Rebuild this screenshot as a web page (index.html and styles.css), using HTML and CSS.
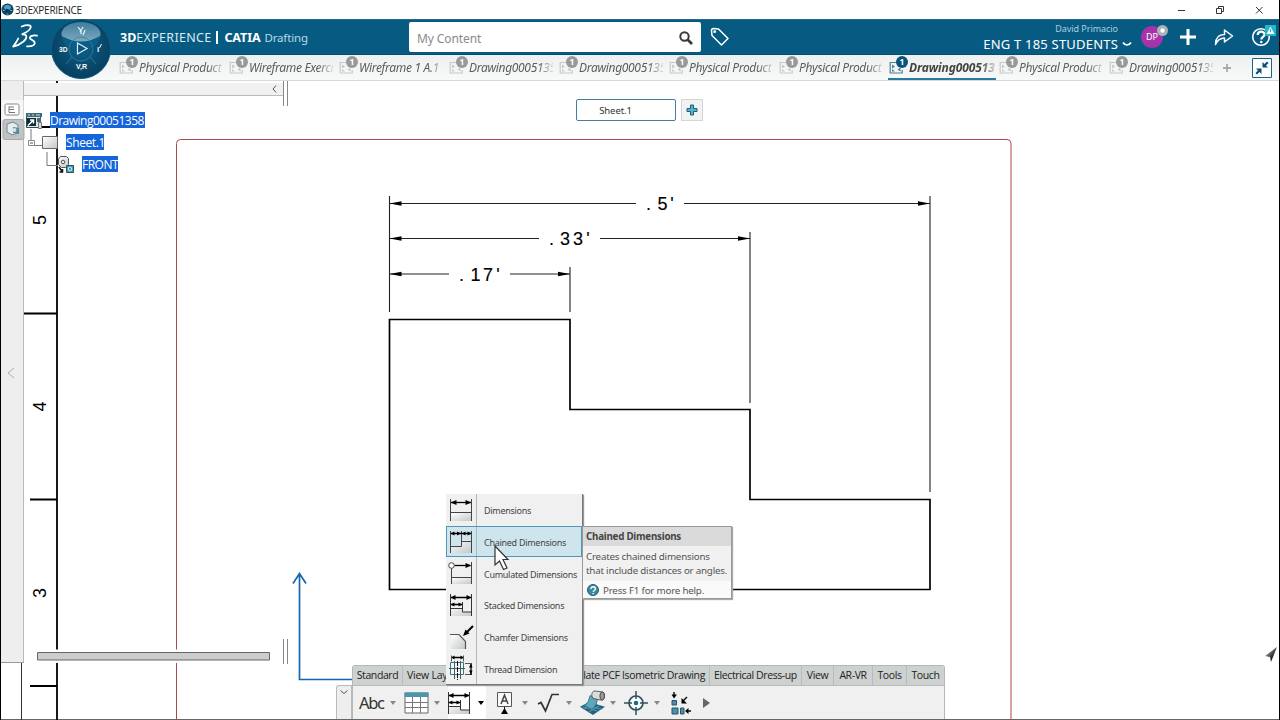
FILE: index.html
```html
<!DOCTYPE html>
<html lang="en">
<head>
<meta charset="utf-8">
<title>3DEXPERIENCE</title>
<link rel="stylesheet" href="styles.css">
</head>
<body>
<svg width="0" height="0" class="defs">
  <defs>
    <radialGradient id="ball" cx="50%" cy="45%" r="55%"><stop offset="0" stop-color="#0b6490"/><stop offset=".6" stop-color="#0a4c70"/><stop offset="1" stop-color="#063f5f"/></radialGradient>
    <linearGradient id="shine" x1="0" y1="0" x2="0" y2="1"><stop offset="0" stop-color="#3d7c9c"/><stop offset="1" stop-color="#8db3c6"/></linearGradient>
    <linearGradient id="metal" x1="0" y1="0" x2="1" y2="1"><stop offset="0" stop-color="#fff"/><stop offset="1" stop-color="#c4c8c9"/></linearGradient>
    <linearGradient id="tip" x1="0" y1="0" x2="1" y2="1"><stop offset="0" stop-color="#e5e5e5"/><stop offset=".65" stop-color="#222"/></linearGradient>
    <symbol id="doc" viewBox="0 0 20 18"><path d="M8 5.500H1.200v10.500h12V13" fill="none" stroke="currentColor" stroke-width="1.200"/><path d="M3 7.500l3 2-3 2zM11.500 14.500l-3-2 3-2zM3 14.500h3l-3-2.500z" fill="currentColor"/></symbol>
    <symbol id="caret" viewBox="0 0 6 4"><path d="M0 0h6L3 4z" fill="currentColor"/></symbol>
    <symbol id="stack" viewBox="0 0 24 24"><path d="M14 12v7h9v4H1v-8h12z" fill="url(#metal)"/><path d="M1.500 1v22M22.500 1v22M13.500 9v10h9M2 15.500h11" fill="none" stroke="#333" stroke-width="1"/><path d="M2 4.500h20M2 11.500h11" stroke="#000" stroke-width="1.300"/><path d="M1.500 4.500l5-2.500v5zM22.500 4.500l-5-2.500v5zM1.500 11.500l4-2v4zM13.500 11.500l-4-2v4z"/></symbol>
  </defs>
</svg>
<div class="app">
  <header class="titlebar">
    <svg class="appicon" viewBox="0 0 14 14"><circle cx="7" cy="7" r="6.500" fill="#07486b"/><path d="M3 4q4-4 8 0l-1 3H4z" fill="#5a9bc0"/><path d="M5.500 6l4 2-4 2z" fill="#0b2c45"/><path d="M2 8h2M10 8h2M6 12h2" stroke="#7fc0e0"/></svg>
    <span class="title">3DEXPERIENCE</span>
    <svg class="wincontrols" viewBox="0 0 90 12"><g fill="none" stroke="#333" stroke-width="1"><path d="M1 6.500h7"/><path d="M39.500 4.500h5v5h-5zM41.500 4.500v-2h5v5h-2"/><path d="M79 3l6.500 6.500M85.500 3L79 9.500"/></g></svg>
  </header>

  <div class="topbar">
    <svg class="logo" viewBox="0 0 28 28"><g fill="none" stroke="#fff" stroke-width="1.800" stroke-linecap="round" stroke-linejoin="round"><path d="M9.700 3.500C14 1.800 19 1.500 18.800 4 18.500 6.500 14 9.500 10.500 11"/><path d="M10.500 11.500C15.500 11 15.500 15 11.500 18.500 8.500 21 4.500 23 1.200 23.500 3 21 5 18.500 6.200 15.500"/><path d="M25 12.700C21 11.800 17.500 13 18 15.200 18.500 17 23 17.500 22.800 20 22.500 22.800 19 23.500 15 23.300"/></g></svg>
    <div class="brand"><b>3D</b><span class="exp">EXPERIENCE</span><i class="bar"></i><b class="catia">CATIA</b><span class="drafting">Drafting</span></div>
    <div class="search"><span>My Content</span>
      <svg viewBox="0 0 14 14"><circle cx="5.500" cy="5.500" r="4.200" fill="none" stroke="#383838" stroke-width="2"/><path d="M8.500 8.500l4.500 4.500" stroke="#383838" stroke-width="2.600"/></svg></div>
    <svg class="tag" viewBox="0 0 20 20"><path d="M1.500 3.500q0-2 2-2l5 .5 9.500 9.500-6.500 6.500L2 8.500z" fill="none" stroke="#fff" stroke-width="1.500" stroke-linejoin="round"/><circle cx="4.700" cy="4.700" r="1.400" fill="#fff"/></svg>
    <div class="account"><span class="user">David Primacio</span><span class="space">ENG T 185 STUDENTS<svg viewBox="0 0 10 6"><path d="M1 1.500q1.500 2.500 4 2.500t4-2.500" fill="none" stroke="#fff" stroke-width="1.700"/></svg></span></div>
    <div class="avatar">DP<i class="status"></i></div>
    <svg class="plus" viewBox="0 0 16 16"><path d="M8 0v16M0 8h16" stroke="#fff" stroke-width="3"/></svg>
    <svg class="share" viewBox="0 0 20 20"><path d="M1.500 17.500c0-6 2.500-10 9-10V3l8 6-8 6v-4c-4 0-7 2-9 6.500z" fill="none" stroke="#fff" stroke-width="1.500" stroke-linejoin="round"/></svg>
    <div class="help"><svg viewBox="0 0 26 24"><circle cx="10" cy="13" r="8.300" fill="none" stroke="#fff" stroke-width="1.600"/><path d="M6.700 11c0-4.500 6.800-4.500 6.800-.5 0 2.500-3.200 2.300-3.200 5" fill="none" stroke="#fff" stroke-width="2.200"/><circle cx="10.300" cy="18" r="1.300" fill="#fff"/><path d="M14 1h11v11H14z" fill="#25b5c7"/><path d="M19.500 2.500l4 7.500h-8z" fill="#e6fbfd"/><path d="M19.500 5v3" stroke="#25b5c7"/></svg></div>
  </div>

  <nav class="tabs">
    <div class="tab"><svg><use href="#doc"/></svg><i>1</i><span>Physical Product</span></div>
    <div class="tab"><svg><use href="#doc"/></svg><i>1</i><span>Wireframe Exerci</span></div>
    <div class="tab"><svg><use href="#doc"/></svg><i>1</i><span>Wireframe 1 A.1</span></div>
    <div class="tab"><svg><use href="#doc"/></svg><i>1</i><span>Drawing0005135</span></div>
    <div class="tab"><svg><use href="#doc"/></svg><i>1</i><span>Drawing0005135</span></div>
    <div class="tab"><svg><use href="#doc"/></svg><i>1</i><span>Physical Product</span></div>
    <div class="tab"><svg><use href="#doc"/></svg><i>1</i><span>Physical Product</span></div>
    <div class="tab active"><svg><use href="#doc"/></svg><i>1</i><span>Drawing000513</span></div>
    <div class="tab"><svg><use href="#doc"/></svg><i>1</i><span>Physical Product</span></div>
    <div class="tab"><svg><use href="#doc"/></svg><i>1</i><span>Drawing0005135</span></div>
    <svg class="addtab" viewBox="0 0 8 8"><path d="M4 0v8M0 4h8" stroke="#aaa" stroke-width="1.800"/></svg>
    <svg class="collapse" viewBox="0 0 20 20"><path d="M.5.500h19v19H.5z" fill="#fff" stroke="#17648b"/><path d="M10.500 9.500V4l2 2L15 3.500l1.500 1.500L14 7.500l2 2zM9.500 10.500V16l-2-2L5 16.500 3.500 15 6 12.500l-2-2z" fill="#08507a"/></svg>
  </nav>
  <svg class="compass" viewBox="0 0 60 60"><circle cx="30" cy="30" r="29.500" fill="url(#ball)" stroke="#0c5a83"/><ellipse cx="30" cy="15" rx="19.500" ry="12" fill="url(#shine)"/><path d="M11 17q19 11 38 0-2 14-19 14T11 17" fill="#0b5d88"/><g fill="none" stroke="#33809f" stroke-width=".8"><circle cx="30" cy="30" r="12"/><path d="M21 38l-6 7M39 38l6 7"/></g><path d="M26.500 24l9.500 5.500-9.500 5.500z" fill="#0b547c" stroke="#e0f0f8" stroke-width="1.200"/><text x="8" y="33" textLength="8.500" lengthAdjust="spacingAndGlyphs">3D</text><text x="46" y="33">i</text><path d="M48.500 29l2-4" stroke="#fff"/><text x="25" y="50" textLength="11" lengthAdjust="spacingAndGlyphs">V,R</text><path d="M27 8l3 4v3M32 8l-3 5M34 11l-2 5" fill="none" stroke="#e8f3f8" stroke-width="1.200"/></svg>

  <main class="workspace">
    <svg class="drawing" viewBox="0 81 1280 639">
      <path d="M21.500 81v639" stroke="#333"/>
      <path d="M57 81v639M24 313.500h33M30 499.500h27M30 686h27M42 127h15" stroke="#000" stroke-width="1.800" fill="none"/>
      <rect x="176.500" y="139.500" width="834.500" height="600" rx="4" fill="none" stroke="#ac4650"/>
      <g class="zone"><text transform="translate(46 220) rotate(-90)">5</text><text transform="translate(46 406.500) rotate(-90)">4</text><text transform="translate(46 593) rotate(-90)">3</text></g>
      <path d="M389.500 319.500H570v90h180v90h180v90H389.500z" fill="none" stroke="#000" stroke-width="1.700"/>
      <path d="M389.500 196v116M570 267v45M750 232v171M930 196v296M390 203.500h246M684 203.500h246M390 238.500h149M600 238.500h150M390 274h59M510 274h60" fill="none" stroke="#222" stroke-width="1.100"/>
      <path d="M389.500 203.500l12-2.300v4.600zM389.500 238.500l12-2.300v4.600zM389.500 274l12-2.300v4.600zM930 203.500l-12-2.300v4.600zM750 238.500l-12-2.300v4.600zM570 274l-12-2.300v4.600z"/>
      <g class="dim"><text x="648.500 662.500 672" y="209.500">.5'</text><text x="551.500 565 578 588" y="245">.33'</text><text x="461.500 475.500 488 498" y="280.500">.17'</text></g>
      <path d="M352 679.500H299.500V574M293 583.500l6.500-10 6.500 10" fill="none" stroke="#1566ae" stroke-width="1.700"/>
      <path d="M283.500 81v25M287.500 81v25M283.500 639v25M287.500 639v25" stroke="#888"/>
      <path d="M30 649.500h252v13.500H30z" fill="#fff"/><path d="M37.500 652.500h232v7.500h-232z" fill="#ccc" stroke="#666"/>
      <path d="M1277 647l-12 9 5 1 1 5z" fill="url(#tip)"/>
    </svg>

    <aside class="rail">
      <svg viewBox="0 0 22 60"><path d="M.5 0h22v20H.5z" fill="#f7f7f7"/><rect x="4" y="4" width="14" height="11" rx="1.500" fill="#fff" stroke="#888"/><path d="M8 6.500v6h6M8 7h5M8 9.500h5" fill="none" stroke="#777"/><rect x="2" y="19.500" width="21" height="20" rx="2" fill="#bfc3c4" stroke="#a6aaab"/><path d="M6 24l6-2 5 3v8l-6 2-5-3z" fill="#e5eaec" stroke="#6b8792"/><path d="M12 27l6 1v6l-6-1z" fill="#5e8898"/><circle cx="13.500" cy="30" r="2" fill="#d4e5ea"/></svg>
    </aside>
    <svg class="railarrow" viewBox="0 0 8 12"><path d="M7 1L1 6l6 5" fill="none" stroke="#aaa"/></svg>
    <div class="panelhead"><svg viewBox="0 0 5 8"><path d="M4 .5L1 4l3 3.500" fill="none" stroke="#555"/></svg></div>
    <div class="tree">
      <svg class="branches" viewBox="0 0 54 64"><path d="M5 17v16M8 33.500h10M21 40v13.500h11" fill="none" stroke="#777"/><path d="M.5 2.500h14v13H.5z" fill="#dce8ea" stroke="#254f5c"/><path d="M0 1h16v4H0z" fill="#416977"/><path d="M2 3h2M6 3h2M10 3h4" stroke="#cfe0e4"/><path d="M1 6h9v8H1z" fill="#132a32"/><path d="M2 13.500l5-5M4 8h3.500v3.500" stroke="#fff" stroke-width="1.500" fill="none"/><path d="M11 6h4v4h-4z" fill="#416977"/><path d="M12.500 10.500h3v6h-3z" fill="#ddd" stroke="#777"/><path d="M2.500 28.500h6v5h-6z" fill="#fff" stroke="#888"/><path d="M4 31h3" stroke="#555"/><path d="M16.500 24.500h15v12h-15z" fill="url(#metal)" stroke="#666"/><path d="M32.500 47l2-2.500h6l2 2v6l-3 3h-4l-3-3z" fill="url(#metal)" stroke="#555"/><circle cx="37" cy="50" r="1.800" fill="none" stroke="#555"/><path d="M33 55l3.500 5M36.500 57v3h-3" stroke="#111" stroke-width="1.500" fill="none"/><path d="M40.500 53.500h7v7h-7z" fill="#479aab" stroke="#255766"/><circle cx="44" cy="57" r="1.800" fill="none" stroke="#d4f0f5"/></svg>
      <span class="node root">Drawing00051358</span>
      <span class="node sheet">Sheet.1</span>
      <span class="node view">FRONT</span>
    </div>

    <div class="sheets"><div class="sheettab">Sheet.1</div><div class="addsheet"><svg viewBox="0 0 12 12"><path d="M4.500 1h3v3.500H11v3H7.500V11h-3V7.500H1v-3h3.500z" fill="#51b4d0" stroke="#255c74"/></svg></div></div>

    <section class="dock">
      <div class="docktoggle"><svg viewBox="0 0 8 5"><path d="M.5.500L4 3.500 7.500.500" fill="none" stroke="#555"/></svg></div>
      <div class="dockmain">
        <div class="sections"><span>Standard</span><span class="layout">View Layout</span><span class="pcf">Update PCF Isometric Drawing</span><span class="electrical">Electrical Dress-up</span><span>View</span><span>AR-VR</span><span>Tools</span><span>Touch</span></div>
        <div class="tools">
          <div class="tool"><span class="abc">Abc</span><svg class="caret"><use href="#caret"/></svg></div>
          <div class="tool"><svg class="ic" viewBox="0 0 26 26"><path d="M2 3h23v20H2z" fill="#fff" stroke="#666"/><path d="M1.500 2.500h24V7h-24z" fill="#4b98ab"/><path d="M2 12.500h23M2 17.500h23M9.500 7v16M17.500 7v16" stroke="#777"/></svg><svg class="caret"><use href="#caret"/></svg></div>
          <div class="tool pressed"><svg class="ic stackicon"><use href="#stack"/></svg><svg class="caret"><use href="#caret"/></svg></div>
          <div class="tool"><svg class="ic" viewBox="0 0 26 26"><path d="M6.500 2.500h14v14h-14z" fill="#fafafa" stroke="#555"/><path d="M10 14l3.500-9 3.500 9M11.300 11h4.500" fill="none" stroke="#444" stroke-width="1.500"/><path d="M13.500 16.500v4" stroke="#222"/><path d="M13.500 18l3.500 6h-7z"/></svg><svg class="caret"><use href="#caret"/></svg></div>
          <div class="tool"><svg class="ic" viewBox="0 0 26 26"><path d="M3 14l3-1.500L10.500 21 17 4.500h7" fill="none" stroke="#333" stroke-width="1.700"/></svg><svg class="caret"><use href="#caret"/></svg></div>
          <div class="tool"><svg class="ic wide" viewBox="0 0 28 28"><path d="M1 18l10-5 17 5-13 9z" fill="#23627f"/><path d="M4 18l17 5M8 16l17 5M5 21l10-6M10 24l12-7" stroke="#6fa7bc" stroke-width=".8"/><path d="M12 6l8 4q-1 7-6 11l-8-4q5-4 6-11z" fill="#5ea5bf" stroke="#326f87"/><path d="M16 1l9 1c4 1 3 9-1 9l-9-2q-3-5 1-8z" fill="#d9dddd" stroke="#555"/><ellipse cx="25" cy="6.500" rx="2.500" ry="4.300" fill="#999" stroke="#444"/></svg><svg class="caret"><use href="#caret"/></svg></div>
          <div class="tool"><svg class="ic" viewBox="0 0 26 26"><circle cx="13" cy="13" r="7" fill="#f8ffff" stroke="#31505b" stroke-width="1.700"/><path d="M13 1v8M13 17v8M1 13h8M17 13h8" stroke="#31505b" stroke-width="1.500"/><circle cx="13" cy="13" r="2.300" fill="#1d6a80"/></svg><svg class="caret"><use href="#caret"/></svg></div>
          <div class="tool"><svg class="ic" viewBox="0 0 26 26"><path d="M5 10.500h4.500v4.500H5zM5 18h6v6H5zM13.500 18h3.500v6h-3.500z" fill="#4b8fa8" stroke="#275668"/><path d="M7 2v4M24 21h-4M20 7l-4 4" stroke="#111" stroke-width="1.500"/><path d="M4.500 4.500h5.500L7 8.500zM21.500 18v6l-3.500-3zM14.500 8v5.500H20z"/></svg><svg class="play" viewBox="0 0 7 10"><path d="M0 0l7 5-7 5z" fill="#666"/></svg></div>
        </div>
      </div>
    </section>

    <ul class="menu">
      <li><svg viewBox="0 0 24 24"><path d="M2 15h20v8H2z" fill="url(#metal)"/><path d="M1.500 1v22M22.500 1v22M2 14.500h20" stroke="#444"/><path d="M2 4.500h20" stroke="#000" stroke-width="1.300"/><path d="M1.500 4.500l6-2.500v5zM22.500 4.500l-6-2.500v5z"/></svg><span>Dimensions</span></li>
      <li class="hover"><svg viewBox="0 0 24 24"><path d="M12 10h10v13H2v-6h10z" fill="url(#metal)"/><path d="M1.500 1v22M22.500 1v22M12.500 1v15.500h-11M12.500 11.500h10" fill="none" stroke="#444"/><path d="M2 3.500h20" stroke="#000" stroke-width="1.500"/><path d="M1.500 3.500l4-2v4zM12 3.500l-4-2v4zM13 3.500l3.500-2v4zM22.500 3.500l-4-2v4z"/></svg><span>Chained Dimensions</span></li>
      <li><svg viewBox="0 0 24 24"><path d="M3 17h19v6H3z" fill="url(#metal)"/><path d="M2.500 7v16M22.500 1v22M3 16.500h19" stroke="#444"/><path d="M5 4.500h16" stroke="#000" stroke-width="1.300"/><circle cx="2.500" cy="4.500" r="2.800" fill="#fff" stroke="#444"/><path d="M22.500 4.500l-6-2.500v5z"/></svg><span>Cumulated Dimensions</span></li>
      <li><svg><use href="#stack"/></svg><span>Stacked Dimensions</span></li>
      <li><svg viewBox="0 0 24 24"><path d="M2 10h8l6 7v7H2z" fill="url(#metal)"/><path d="M1 9.500h9l6.500 7V24" fill="none" stroke="#555" stroke-width="1.200"/><path d="M24 1l-7 7" stroke="#000" stroke-width="2"/><path d="M14 11l2.500-6.500 4 4z"/></svg><span>Chamfer Dimensions</span></li>
      <li><svg viewBox="0 0 24 24"><path d="M1.500 6.500h13v12h-13z" fill="#edf6f8" stroke="#3e7586"/><path d="M2.500-.5v6M14.500-.5v6M5.500 5v18M11.500 5v18M0 12.500h16M16 7.500h7M16 18.500h7" stroke="#555"/><path d="M8.500 5v19" stroke="#111" stroke-dasharray="5 1"/><path d="M3 1.500h11M22 8v11" stroke="#000" stroke-width="1.300"/><path d="M2.500 1.500l3-2v4zM14.500 1.500l-3-2v4zM22 7.500l-2 4h3.500zM22 18.500l-2-4h3.500z"/></svg><span>Thread Dimension</span></li>
    </ul>

    <div class="tooltip">
      <h2>Chained Dimensions</h2>
      <p>Creates chained dimensions<br>that include distances or angles.</p>
      <footer><svg viewBox="0 0 12 12"><circle cx="6" cy="6" r="5.500" fill="#3a89a3" stroke="#255c74"/><path d="M4 5c0-3 4.500-3 4.500 0 0 1.500-2.200 1-2.200 3M6.200 9v1.200" fill="none" stroke="#fff" stroke-width="1.400"/></svg><span>Press F1 for more help.</span></footer>
    </div>
    <svg class="cursor" viewBox="0 0 16 27"><path d="M1 1v19l4.500-4 4 8.500 3.500-1.500-4-8.500h5z" fill="#fff" stroke="#333" stroke-width="1.200"/></svg>
  </main>
</div>
</body>
</html>
```
FILE: styles.css
```css
* { box-sizing: border-box; }
body { margin: 0; background: #fff; font-family: "Noto Sans", "Open Sans", sans-serif; color: #333; }
svg { display: block; flex: none; overflow: visible; }
.defs { position: absolute; }
.app { position: relative; width: 1280px; height: 720px; overflow: hidden; display: flex; flex-direction: column; border-left: 1px solid #000; }
.app::after { content: ""; position: absolute; inset: 0 0 0 auto; width: 1px; background: #000; }
.titlebar { height: 19px; display: flex; align-items: center; background: #fff; flex: none; }
.appicon { width: 13px; height: 13px; }
.title { margin-left: 1px; font: 10px "Open Sans", sans-serif; color: #222; letter-spacing: -.25px; width: 90px; }
.wincontrols { width: 90px; height: 12px; margin-left: auto; margin-right: 13px; }
.topbar { height: 36px; background: #075b82; color: #fff; display: flex; align-items: center; flex: none; border-bottom: 1px solid #064b70; border-top: 1px solid #26698b; }
.logo { width: 28px; height: 28px; margin-left: 11px; }
.brand { display: flex; align-items: center; margin-left: 80px; width: 289px; font-size: 12.5px; line-height: 18px; padding-top: 1px; }
.exp { letter-spacing: .3px; color: #d8eaf3; }
.bar { width: 2px; height: 13px; background: #fff; margin: 0 6px 0 5px; }
.catia { letter-spacing: -.1px; }
.drafting { font-size: 11.5px; margin-left: 4px; color: #b9d9e8; letter-spacing: -.15px; }
.search { width: 292px; height: 30px; background: #fff; border-radius: 2px; color: #8a8a8a; display: flex; align-items: center; justify-content: space-between; padding: 2px 8px 0; font-size: 12px; letter-spacing: -.1px; }
.search svg { width: 14px; height: 14px; }
.tag { width: 20px; height: 20px; margin-left: 9px; }
.account { margin-left: auto; width: 160px; display: flex; flex-direction: column; line-height: 14px; }
.user { font-size: 9px; color: #a9cfe2; align-self: flex-end; margin-right: 14px; letter-spacing: -.05px; position: relative; top: -1px; }
.space { font-size: 13px; letter-spacing: .2px; display: flex; align-items: center; gap: 4px; justify-content: flex-end; white-space: nowrap; line-height: 16px; }
.space { margin-top: -1px; }
.space svg { width: 10px; height: 6px; }
.avatar { position: relative; width: 22px; height: 22px; border-radius: 50%; background: #a733a9; font-size: 9px; line-height: 22px; text-align: center; margin-left: 9px; }
.status { position: absolute; left: 16px; top: -1px; width: 11px; height: 11px; border-radius: 50%; background: radial-gradient(#fff 20%, #a9b3ba 35%); }
.plus { width: 16px; height: 16px; margin-left: 17px; }
.share { width: 20px; height: 20px; margin-left: 18px; }
.help { width: 26px; height: 24px; margin: -3px 3px 0 17px; }
.help svg { width: 26px; height: 24px; }
.tabs { height: 26px; flex: none; background: linear-gradient(#eef0f0, #f8f9f9); border-bottom: 1px solid #d8dada; display: flex; align-items: center; padding-left: 118px; }
.tab { width: 110px; height: 25px; display: flex; align-items: center; position: relative; color: #c8caca; flex: none; }
.tab svg { width: 20px; height: 18px; margin-top: -3px; }
.tab i { position: absolute; left: 7px; top: 1px; width: 12px; height: 12px; border-radius: 50%; background: #999; color: #fff; font: bold 8.5px/12px "Noto Sans", sans-serif; text-align: center; }
.tab span { width: 84px; overflow: hidden; white-space: nowrap; font: italic 12px/20px "Noto Sans", sans-serif; letter-spacing: -.32px; color: #5c5c5c; -webkit-mask-image: linear-gradient(90deg, #000 82%, transparent 103%); mask-image: linear-gradient(90deg, #000 82%, transparent 103%); }
.tab.active { color: #4a7d93; }
.tab.active i { background: #07557c; }
.tab.active span { font-weight: 700; color: #444; width: 87px; letter-spacing: -.1px; }
.tab.active::after { content: ""; position: absolute; left: -1px; right: 3px; bottom: 0; height: 2px; background: #267ba3; }
.addtab { width: 8px; height: 8px; margin-left: 4px; }
.collapse { width: 20px; height: 20px; margin-left: 21px; }
.compass { position: absolute; left: 50px; top: 19px; width: 60px; height: 60px; }
.compass text { font: bold 8px "Liberation Sans", sans-serif; fill: #fff; }
.workspace { position: relative; height: 639px; margin-left: -1px; border-bottom: 1px solid #666; border-left: 1px solid #000; }
.drawing { position: absolute; left: -1px; top: 0; width: 1280px; height: 639px; }
.zone text { font: 18px "Liberation Sans", sans-serif; text-anchor: middle; }
.dim text { font: 18px "Liberation Sans", sans-serif; text-anchor: middle; stroke: #000; stroke-width: .15; }
.rail { position: absolute; left: 0; top: 0; width: 23px; height: 582px; background: #eee; border-right: 1px solid #bbb; border-bottom: 1px solid #999; padding-top: 19px; }
.rail svg { width: 22px; height: 60px; }
.railarrow { position: absolute; left: 6px; top: 286px; width: 8px; height: 12px; }
.panelhead { position: absolute; left: 23px; top: 2px; width: 259px; height: 13px; background: #f1f1f1; border-bottom: 1px solid #bbb; display: flex; align-items: center; justify-content: flex-end; padding-right: 6px; }
.panelhead svg { width: 5px; height: 8px; }
.tree { position: absolute; left: 25px; top: 31px; width: 130px; display: flex; flex-direction: column; align-items: flex-start; gap: 6px; padding-left: 24px; }
.branches { position: absolute; left: 0; top: 0; width: 54px; height: 64px; }
.node { height: 16px; background: #1464da; color: #fff; font: 12px/17px "Open Sans", sans-serif; white-space: nowrap; letter-spacing: -.5px; }
.root { width: 95px; }
.sheet { margin-left: 16px; width: 38px; letter-spacing: -.4px; }
.view { margin-left: 32px; width: 36px; }
.sheets { position: absolute; left: 575px; top: 18px; display: flex; gap: 5px; }
.sheettab { width: 100px; height: 22px; border: 1px solid #447d9e; border-radius: 2px; background: #fff; font-size: 9.5px; line-height: 22px; text-align: center; padding-right: 21px; letter-spacing: -.1px; }
.addsheet { width: 22px; height: 22px; background: #f1f2f2; border: 1px solid #d5d5d5; display: grid; place-items: center; }
.addsheet svg { width: 12px; height: 12px; }
.dock { position: absolute; left: 335px; top: 584px; height: 54px; display: flex; align-items: flex-end; }
.docktoggle { width: 16px; height: 34px; background: #eee; border: 1px solid #bbb; border-bottom: 0; border-radius: 3px 0 0 0; padding: 4px 3px; }
.docktoggle svg { width: 8px; height: 5px; }
.dockmain { width: 593px; height: 54px; background: #f0f0f0; border: 1px solid #b5b8b8; border-bottom: 0; border-radius: 3px 3px 0 0; }
.sections { height: 20px; display: grid; grid-template-columns: 50px 165px 142px 92px 32px 39px 34px 37px; background: #cdd1d0; border-bottom: 1px solid #b8bbba; font: 10.5px/19px "Open Sans", sans-serif; letter-spacing: -.4px; color: #222; }
.sections span { text-align: center; white-space: nowrap; border-right: 1px solid #bbb; }
.sections span:last-child { border: 0; }
.sections .layout { text-align: left; padding-left: 4px; letter-spacing: -.25px; }
.sections .pcf { text-align: right; padding-right: 4px; letter-spacing: -.35px; margin-left: -6px; }
.tools { display: flex; padding-left: 3px; }
.tool { width: 44px; height: 33px; display: flex; align-items: center; color: #888; flex: none; padding-left: 3px; }
.ic { width: 26px; height: 26px; }
.stackicon { width: 24px; height: 24px; margin-right: 2px; }
.caret { width: 6px; height: 4px; margin-left: 5px; }
.tool .play { width: 7px; height: 10px; margin-left: 10px; }
.abc { width: 26px; font-size: 16.5px; letter-spacing: -1.3px; color: #333; line-height: 20px; }
.pressed { background: linear-gradient(90deg, transparent 4px, #fff 4px 42px, transparent 42px); color: #000; }
.menu { position: absolute; left: 445px; top: 413px; width: 137px; height: 191px; margin: 0; padding: 0; list-style: none; background: linear-gradient(90deg, transparent 30px, #b5b5b5 30px 31px, transparent 31px), #f0f0f0; border-right: 1px solid #777; border-bottom: 1px solid #777; box-shadow: 1px 1px 1px #999; display: grid; grid-template-rows: repeat(6, 31.7px); }
.menu li { display: flex; align-items: center; font-size: 9px; letter-spacing: -.28px; color: #444; padding-left: 2px; border: 1px solid transparent; white-space: nowrap; }
.menu svg { width: 24px; height: 24px; }
.menu span { margin-left: 11px; padding-top: 2px; }
.menu .hover { background: linear-gradient(90deg, transparent 29px, #a5bfc8 29px 30px, transparent 30px), #cfe5ed; border-color: #4d98b5; }
.tooltip { position: absolute; left: 581px; top: 445px; width: 150px; height: 73px; background: #f1f1f1; border: 1px solid #999; box-shadow: 1px 1px 1px #aaa; color: #555; font-size: 9.8px; letter-spacing: -.22px; }
.tooltip h2 { margin: 0; height: 19px; background: #dadada; font-size: 9.8px; line-height: 19px; padding-left: 3px; color: #444; letter-spacing: -.25px; }
.tooltip p { margin: 0; padding: 4px 0 0 3px; line-height: 14px; height: 35px; white-space: nowrap; }
.tooltip footer { height: 17px; background: #fafafa; display: flex; align-items: center; padding: 1px 0 0 4px; gap: 4px; }
.tooltip footer svg { width: 12px; height: 12px; }
.cursor { position: absolute; left: 493px; top: 464px; width: 16px; height: 27px; }
```
